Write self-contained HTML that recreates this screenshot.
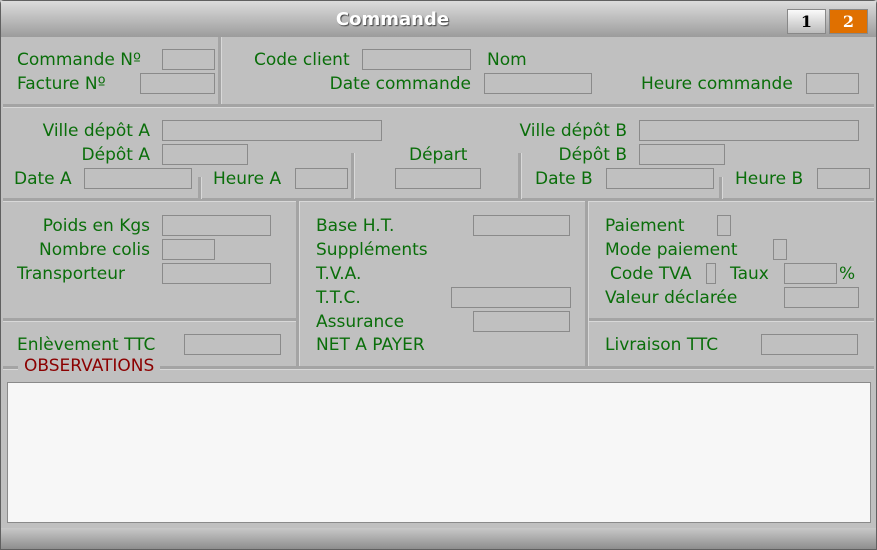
<!DOCTYPE html><html><head><meta charset="utf-8"><style>
*{margin:0;padding:0;box-sizing:border-box}
body{width:877px;height:550px;background:#c0c0c0;position:relative;overflow:hidden;font-family:"DejaVu Sans","Liberation Sans",sans-serif}
.w{position:absolute;left:0;top:0;width:877px;height:550px;border:1px solid #606060;border-radius:4px 4px 0 0}
.t{position:absolute;left:1px;top:1px;width:875px;height:36px;background:linear-gradient(#dcdcdc,#9c9c9c)}
.tt{position:absolute;left:0;width:785px;top:9px;text-align:center;color:#fff;font-weight:bold;font-size:18px;text-shadow:1px 1px 1px #444}
.b{position:absolute;top:9px;width:39px;height:25px;border:1px solid #888;font-weight:bold;font-size:16px;text-align:center;line-height:23px;font-family:"DejaVu Serif",serif}
.l{position:absolute;font-size:17px;color:#0a6e0a;white-space:nowrap;line-height:20px}
.i{position:absolute;border:1px solid #8a8a8a;height:21px}
.h{position:absolute;height:4px;background:#a4a4a4;border-bottom:1px solid #d8d8d8}
.v{position:absolute;width:4px;background:#a4a4a4;border-right:1px solid #d8d8d8}
</style></head><body>
<div class="w"></div>
<div class="t"></div>
<div class="tt">Commande</div>
<div class="b" style="left:787px;background:linear-gradient(#fafafa,#bcbcbc);color:#000">1</div>
<div class="b" style="left:829px;background:#e07000;color:#fff">2</div>
<div class="h" style="left:3px;top:104px;width:871px"></div>
<div class="v" style="left:218px;top:37px;height:67px"></div>
<div class="h" style="left:3px;top:198px;width:871px"></div>
<div class="v" style="left:198px;top:177px;height:22px"></div>
<div class="v" style="left:351px;top:153px;height:46px"></div>
<div class="v" style="left:518px;top:153px;height:46px"></div>
<div class="v" style="left:719px;top:177px;height:22px"></div>
<div class="v" style="left:296px;top:201px;height:165px"></div>
<div class="v" style="left:585px;top:201px;height:165px"></div>
<div class="h" style="left:3px;top:318px;width:293px"></div>
<div class="h" style="left:589px;top:318px;width:285px"></div>
<div class="h" style="left:3px;top:366px;width:871px"></div>
<div class="l" style="left:18px;top:356px;padding:0 6px;background:#c0c0c0;color:#8b0000">OBSERVATIONS</div>
<div style="position:absolute;left:7px;top:382px;width:864px;height:141px;background:#f7f7f7;border:1px solid #8a8a8a"></div>
<div style="position:absolute;left:1px;top:528px;width:875px;height:21px;background:linear-gradient(#c8c8c8,#8e8e8e)"></div>

<div class="l" style="left:17px;top:50px">Commande Nº</div><div class="i" style="left:162px;top:49px;width:53px"></div>
<div class="l" style="left:17px;top:74px">Facture Nº</div><div class="i" style="left:140px;top:73px;width:75px"></div>
<div class="l" style="left:254px;top:50px">Code client</div><div class="i" style="left:362px;top:49px;width:109px"></div>
<div class="l" style="left:487px;top:50px">Nom</div>
<div class="l" style="right:406px;top:74px">Date commande</div><div class="i" style="left:484px;top:73px;width:108px"></div>
<div class="l" style="left:641px;top:74px">Heure commande</div><div class="i" style="left:806px;top:73px;width:53px"></div>

<div class="l" style="right:727px;top:121px">Ville dépôt A</div><div class="i" style="left:162px;top:120px;width:220px"></div>
<div class="l" style="right:727px;top:145px">Dépôt A</div><div class="i" style="left:162px;top:144px;width:86px"></div>
<div class="l" style="left:14px;top:169px">Date A</div><div class="i" style="left:84px;top:168px;width:108px"></div>
<div class="l" style="left:213px;top:169px">Heure A</div><div class="i" style="left:295px;top:168px;width:53px"></div>
<div class="l" style="left:409px;top:145px">Départ</div><div class="i" style="left:395px;top:168px;width:86px"></div>
<div class="l" style="right:250px;top:121px">Ville dépôt B</div><div class="i" style="left:639px;top:120px;width:220px"></div>
<div class="l" style="right:250px;top:145px">Dépôt B</div><div class="i" style="left:639px;top:144px;width:86px"></div>
<div class="l" style="left:535px;top:169px">Date B</div><div class="i" style="left:606px;top:168px;width:108px"></div>
<div class="l" style="left:735px;top:169px">Heure B</div><div class="i" style="left:817px;top:168px;width:53px"></div>

<div class="l" style="right:727px;top:216px">Poids en Kgs</div><div class="i" style="left:162px;top:215px;width:109px"></div>
<div class="l" style="right:727px;top:240px">Nombre colis</div><div class="i" style="left:162px;top:239px;width:53px"></div>
<div class="l" style="left:17px;top:264px">Transporteur</div><div class="i" style="left:162px;top:263px;width:109px"></div>
<div class="l" style="left:17px;top:335px">Enlèvement TTC</div><div class="i" style="left:184px;top:334px;width:97px"></div>

<div class="l" style="left:316px;top:216px">Base H.T.</div><div class="i" style="left:473px;top:215px;width:97px"></div>
<div class="l" style="left:316px;top:240px">Suppléments</div>
<div class="l" style="left:316px;top:264px">T.V.A.</div>
<div class="l" style="left:316px;top:288px">T.T.C.</div><div class="i" style="left:451px;top:287px;width:120px"></div>
<div class="l" style="left:316px;top:312px">Assurance</div><div class="i" style="left:473px;top:311px;width:97px"></div>
<div class="l" style="left:316px;top:335px">NET A PAYER</div>

<div class="l" style="left:605px;top:216px">Paiement</div><div class="i" style="left:717px;top:215px;width:14px"></div>
<div class="l" style="left:605px;top:240px">Mode paiement</div><div class="i" style="left:773px;top:239px;width:14px"></div>
<div class="l" style="left:610px;top:264px">Code TVA</div><div class="i" style="left:706px;top:263px;width:10px"></div>
<div class="l" style="left:730px;top:264px">Taux</div><div class="i" style="left:784px;top:263px;width:53px"></div>
<div class="l" style="left:839px;top:264px">%</div>
<div class="l" style="left:605px;top:288px">Valeur déclarée</div><div class="i" style="left:784px;top:287px;width:75px"></div>
<div class="l" style="left:605px;top:335px">Livraison TTC</div><div class="i" style="left:761px;top:334px;width:97px"></div>
</body></html>
